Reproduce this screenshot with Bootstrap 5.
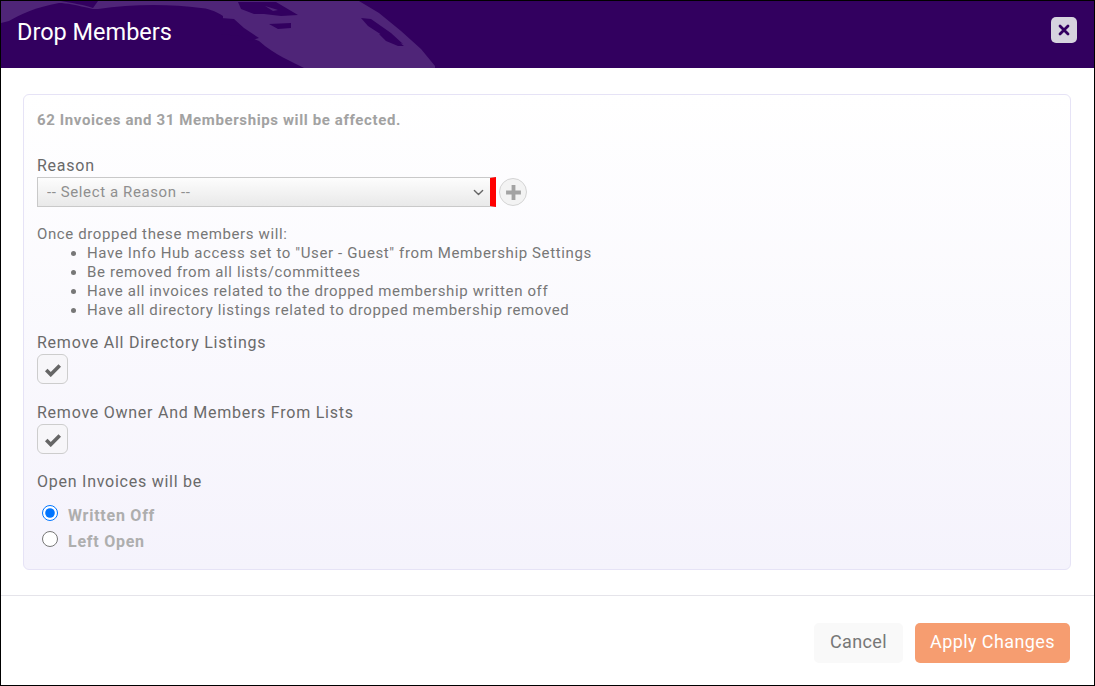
<!DOCTYPE html>
<html lang="en">
<head>
<meta charset="utf-8">
<title>Drop Members</title>
<link rel="stylesheet" href="https://cdn.jsdelivr.net/npm/bootstrap@5.3.0/dist/css/bootstrap.min.css">
<style>
html,body{height:100%;margin:0;background:#fff}
body{font-family:Roboto,"Liberation Sans",sans-serif;color:#6c6c6c}
.dlg{height:686px;border:1px solid #000;border-radius:0;overflow:hidden}
.dlg-head{height:67px;background:#32005f;color:#fff;padding:0 16px;overflow:hidden}
.dlg-title{font-size:23.5px;font-weight:400;margin:0;line-height:1;padding-bottom:3px}
.head-art{left:0;top:0;width:560px;height:67px}
.dlg-x{width:26px;height:26px;background:#d6d4de;border:0;border-radius:5px;padding:0;margin-right:1px;margin-top:-10px}
.dlg-body{padding:26px 23px 25px 22px}
.panel{height:476px;border:1px solid #e6e3f6;border-radius:6px;background:linear-gradient(#fff,#f5f3fc);padding:16px 13px;letter-spacing:.6px}
.affect{font-size:15px;font-weight:700;color:#a2a2a2;line-height:18px;margin-bottom:26px;letter-spacing:.62px}
.fld{font-size:16px;line-height:20px;color:#6a6a6a;margin:0;display:block;letter-spacing:.75px}
.lift{line-height:22px;margin-bottom:-2px}
.sel-wrap{margin-top:2px}
.sel{width:459px;height:30px;font-size:15px;color:#8f8f8f;letter-spacing:.6px;border:1px solid #c9c9c9;border-right:6px solid #f00;border-radius:0;padding:0 9px;background-color:#eee;background-image:url("data:image/svg+xml,%3Csvg xmlns='http://www.w3.org/2000/svg' viewBox='0 0 16 16'%3E%3Cpath fill='none' stroke='%23666' stroke-linecap='round' stroke-linejoin='round' stroke-width='2' d='m2 5 6 6 6-6'/%3E%3C/svg%3E"),linear-gradient(#fdfdfd,#e9e9e9);background-repeat:no-repeat,repeat;background-position:right 5px center,0 0;background-size:13px 11px,auto}
.plus{width:28px;height:28px;margin-left:3px;border-radius:50%;border:1px solid #d4d4d4;background:#f3f3f3;padding:0}
.once{font-size:15px;line-height:19px;color:#777;margin-top:18px;letter-spacing:.62px}
.once ul{margin:0;padding-left:50px}
.chk{width:31px;height:30px;border:1px solid #cdcdcd;border-radius:6px;background:#f7f6f9;padding:0;margin-top:2px;margin-bottom:18px}
.first-fld{margin-top:12px}
.opts{margin-top:11px;padding-left:5px}
.opt{height:26px;font-size:16px;font-weight:700;color:#aeaeae;letter-spacing:.75px}
.opt input{width:16px;height:16px;margin:0 10px 6px 0;accent-color:#0075ff}
.dlg-foot{border-top:1px solid #e5e4ea;padding:27px 24px 0 0}
.b-cancel,.b-apply{height:40px;font-size:18px;border:0;border-radius:5px;padding:0 0 3px;letter-spacing:.4px}
.b-cancel{width:89px;background:#f9f9f9;color:#777}
.b-apply{width:155px;background:#f69d70;color:#fff}
</style>
</head>
<body>
<div class="dlg d-flex flex-column">
  <div class="dlg-head position-relative d-flex align-items-center justify-content-between">
    <svg class="head-art position-absolute" viewBox="0 0 560 67" aria-hidden="true">
      <path fill="#4f2578" d="M0 0H60C70 2 85 4 92 7L97 0H358L378 12 400 30 420 48 434 65V67H303C290 60 275 55 258 40 245 34 232 32 222 30V15C215 10 205 7 200 7 170 3 130 3 97 8H92C75 4 65 2 58 2 35 6 18 14 8 20L0 22Z"/>
      <path fill="#32005f" d="M237 1H275L297 14 280 15 263 13 253 13 240 8ZM268 23 290 22 290 27 277 28ZM220 17 233 18 243 27 258 37 248 40 238 35 220 33ZM360 17 370 18 390 32 402 43 387 38 367 25ZM378 33 390 35 403 45 397 45 385 40Z"/>
      <path fill="#4f2578" d="M264 5 277 9 272 10Z"/>
    </svg>
    <h1 class="dlg-title position-relative">Drop Members</h1>
    <button class="dlg-x position-relative d-flex align-items-center justify-content-center" type="button" aria-label="Close">
      <svg width="12" height="12" viewBox="0 0 12 12"><path d="M2 2l8 8M10 2l-8 8" stroke="#32005f" stroke-width="2.8" stroke-linecap="round"/></svg>
    </button>
  </div>
  <div class="dlg-body">
    <div class="panel">
      <div class="affect">62 Invoices and 31 Memberships will be affected.</div>
      <label class="fld lift" for="reason">Reason</label>
      <div class="sel-wrap d-flex align-items-center">
        <select id="reason" class="form-select sel"><option>-- Select a Reason --</option></select>
        <button class="plus d-flex align-items-center justify-content-center" type="button" aria-label="Add">
          <svg width="17" height="17" viewBox="0 0 16 16"><path d="M8 1v14M1 8h14" stroke="#a3a3a3" stroke-width="3.600"/></svg>
        </button>
      </div>
      <div class="once">Once dropped these members will:
        <ul>
          <li>Have Info Hub access set to "User - Guest" from Membership Settings</li>
          <li>Be removed from all lists/committees</li>
          <li>Have all invoices related to the dropped membership written off</li>
          <li>Have all directory listings related to dropped membership removed</li>
        </ul>
      </div>
      <div class="fld lift first-fld">Remove All Directory Listings</div>
      <button class="chk d-flex align-items-center justify-content-center" type="button" aria-label="Remove All Directory Listings">
        <svg width="18" height="15" viewBox="0 0 16 13"><path d="M2 7l4 4 8-8" fill="none" stroke="#666" stroke-width="3.200"/></svg>
      </button>
      <div class="fld lift">Remove Owner And Members From Lists</div>
      <button class="chk d-flex align-items-center justify-content-center" type="button" aria-label="Remove Owner And Members From Lists">
        <svg width="18" height="15" viewBox="0 0 16 13"><path d="M2 7l4 4 8-8" fill="none" stroke="#666" stroke-width="3.200"/></svg>
      </button>
      <div class="fld">Open Invoices will be</div>
      <div class="opts">
        <label class="opt d-flex align-items-center"><input type="radio" name="inv" checked>Written Off</label>
        <label class="opt d-flex align-items-center"><input type="radio" name="inv">Left Open</label>
      </div>
    </div>
  </div>
  <div class="dlg-foot d-flex justify-content-end gap-2">
    <button class="b-cancel" type="button">Cancel</button>
    <button class="b-apply ms-1" type="button">Apply Changes</button>
  </div>
</div>
</body>
</html>
